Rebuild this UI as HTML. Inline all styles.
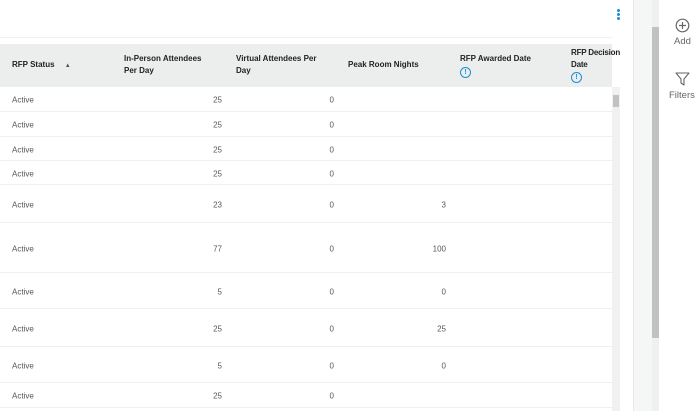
<!DOCTYPE html><html><head><style>
body{margin:0;width:700px;height:411px;overflow:hidden;background:#fff;font-family:"Liberation Sans",sans-serif;position:relative}
.abs{position:absolute}
.hdr{left:0;top:44px;width:612px;height:43px;background:#eceeee}
.h{position:absolute;font-size:8px;font-weight:bold;color:#222;line-height:12px}
.row{position:absolute;left:0;width:612px;border-bottom:1px solid #eef0f0;font-size:8px;color:#555}
.row span{position:absolute;top:50%;transform:translateY(-40%)}
.info{display:inline-block;width:9px;height:9px;border:1.3px solid #1a8fd6;border-radius:50%;color:#1a8fd6;font-size:7px;text-align:center;line-height:9px;font-weight:bold}
</style></head><body>
<div class="abs" style="left:0;top:37px;width:612px;border-top:1px solid #f0f0f0"></div>
<div class="abs" style="left:617px;top:9px;width:3px;height:3px;background:#1a8fd6;border-radius:50%;box-shadow:0 4px 0 #1a8fd6,0 8px 0 #1a8fd6"></div>
<div class="abs hdr"></div>
<div class="h" style="left:12px;top:59px">RFP Status <span style="font-size:6px;margin-left:8px;color:#555">▲</span></div>
<div class="h" style="left:124px;top:53px">In-Person Attendees<br>Per Day</div>
<div class="h" style="left:236px;top:53px">Virtual Attendees Per<br>Day</div>
<div class="h" style="left:348px;top:59px">Peak Room Nights</div>
<div class="h" style="left:460px;top:53px">RFP Awarded Date<br><span class="info" style="margin-top:2px">!</span></div>
<div class="h" style="left:571px;top:47px;letter-spacing:-0.2px">RFP Decision<br>Date<br><span class="info" style="margin-top:1px">!</span></div>
<div class="abs" style="left:612px;top:87px;width:8px;height:324px;background:#f1f1f1"></div>
<div class="abs" style="left:613px;top:95px;width:6px;height:12px;background:#c1c1c1"></div>
<div class="abs" style="left:633px;top:0;width:19px;height:411px;background:#f5f6f6;border-left:1px solid #e8e8e8"></div>
<div class="abs" style="left:652px;top:0;width:7px;height:411px;background:#f0f0f0"></div>
<div class="abs" style="left:652px;top:27px;width:7px;height:311px;background:#c1c1c1"></div>
<svg class="abs" style="left:675px;top:18px" width="15" height="15" viewBox="0 0 15 15"><circle cx="7.5" cy="7.5" r="6.3" fill="none" stroke="#666" stroke-width="1.2"/><path d="M7.5 4v7M4 7.5h7" stroke="#666" stroke-width="1.2"/></svg>
<div class="abs" style="left:674px;top:36px;font-size:9.5px;color:#666">Add</div>
<svg class="abs" style="left:675px;top:72px" width="15" height="14" viewBox="0 0 15 14"><path d="M1 1h13l-5 6v6l-3-2V7z" fill="none" stroke="#666" stroke-width="1.1" stroke-linejoin="round"/></svg>
<div class="abs" style="left:669px;top:90px;font-size:9.5px;color:#666">Filters</div>
<div id="rows"></div>
<script>
var d=[[87,25,25,0,''],[112,25,25,0,''],[137,24,25,0,''],[161,24,25,0,''],[185,38,23,0,3],[223,50,77,0,100],[273,36,5,0,0],[309,38,25,0,25],[347,36,5,0,0],[383,25,25,0,'']];
var h='';d.forEach(function(r){h+='<div class="row" style="top:'+r[0]+'px;height:'+(r[1]-1)+'px"><span style="left:12px">Active</span><span style="right:390px">'+r[2]+'</span><span style="right:278px">'+r[3]+'</span><span style="right:166px">'+r[4]+'</span></div>'});
document.getElementById('rows').innerHTML=h;
</script>
</body></html>
